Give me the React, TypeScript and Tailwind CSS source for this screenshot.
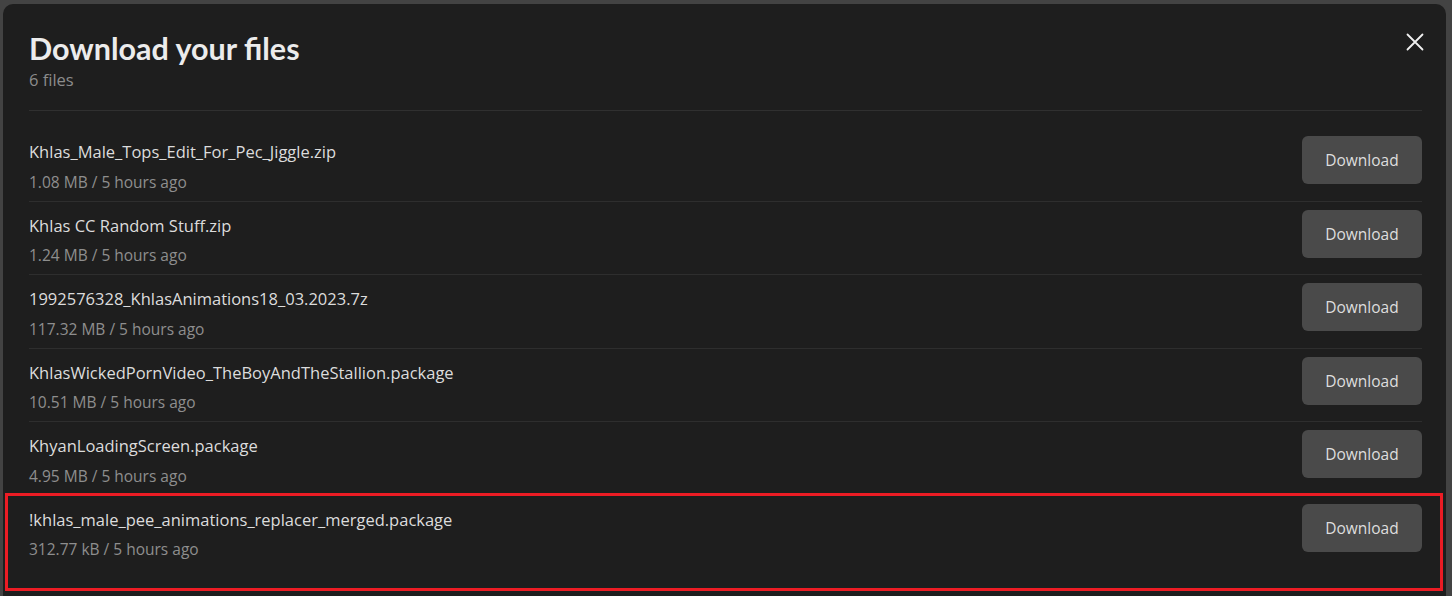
import React from "react";

const files = [
  { name: "Khlas_Male_Tops_Edit_For_Pec_Jiggle.zip", meta: "1.08 MB / 5 hours ago" },
  { name: "Khlas CC Random Stuff.zip", meta: "1.24 MB / 5 hours ago" },
  { name: "1992576328_KhlasAnimations18_03.2023.7z", meta: "117.32 MB / 5 hours ago" },
  { name: "KhlasWickedPornVideo_TheBoyAndTheStallion.package", meta: "10.51 MB / 5 hours ago" },
  { name: "KhyanLoadingScreen.package", meta: "4.95 MB / 5 hours ago" },
  { name: "!khlas_male_pee_animations_replacer_merged.package", meta: "312.77 kB / 5 hours ago", highlight: true },
];

export default function App() {
  return (
    <div
      className="h-[596px] w-[1452px] overflow-hidden bg-[#434343] pt-1 pl-[3px] pr-[6px]"
      style={{ fontFamily: '"Open Sans", "Noto Sans", sans-serif' }}
    >
      <div className="relative h-[640px] rounded-[10px] bg-[#1e1e1e] pl-[26px] pr-6 pt-[26px]">
        <button className="absolute right-[22px] top-[29px] flex h-[18px] w-[18px] items-center justify-center text-[#f0f0f0]">
          <svg width="18" height="18" viewBox="0 0 18 18" fill="none" stroke="currentColor" strokeWidth="1.8" strokeLinecap="round">
            <path d="M1.5 1.5 L16.5 16.5 M16.5 1.5 L1.5 16.5" />
          </svg>
        </button>
        <h2 className="text-[30.5px] font-bold leading-[36px] text-[#ececec]" style={{ fontFamily: 'Lato, "Open Sans", sans-serif' }}>
          Download your files
        </h2>
        <p className="mt-[2px] text-[16.5px] leading-[24px] text-[#8c8c8c]">6 files</p>
        <div className="mt-[18px] border-t border-[#303030]" />
        <div className="pt-[17px]">
          {files.map((f, i) => (
            <div
              key={i}
              className={`relative flex items-start justify-between pt-2 pb-[7px] ${i < files.length - 1 ? "border-b border-[#2e2e2e]" : ""}`}
            >
              {f.highlight && (
                <div className="pointer-events-none absolute -left-[24px] -right-[21px] -top-[3px] h-[98px] border-[3px] border-[#ec1c24]" />
              )}
              <div className="flex flex-col pt-[1px]">
                <span className="text-[16.5px] leading-[30px] text-[#dcdcdc]">{f.name}</span>
                <span className="mt-[2.5px] text-[15.5px] leading-[24px] text-[#8e8e8e]">{f.meta}</span>
              </div>
              <button className="h-12 w-[120px] rounded-md bg-[#4a4a4a] pt-[2px] text-[15.5px] text-[#dedede]">
                Download
              </button>
            </div>
          ))}
        </div>
      </div>
    </div>
  );
}
